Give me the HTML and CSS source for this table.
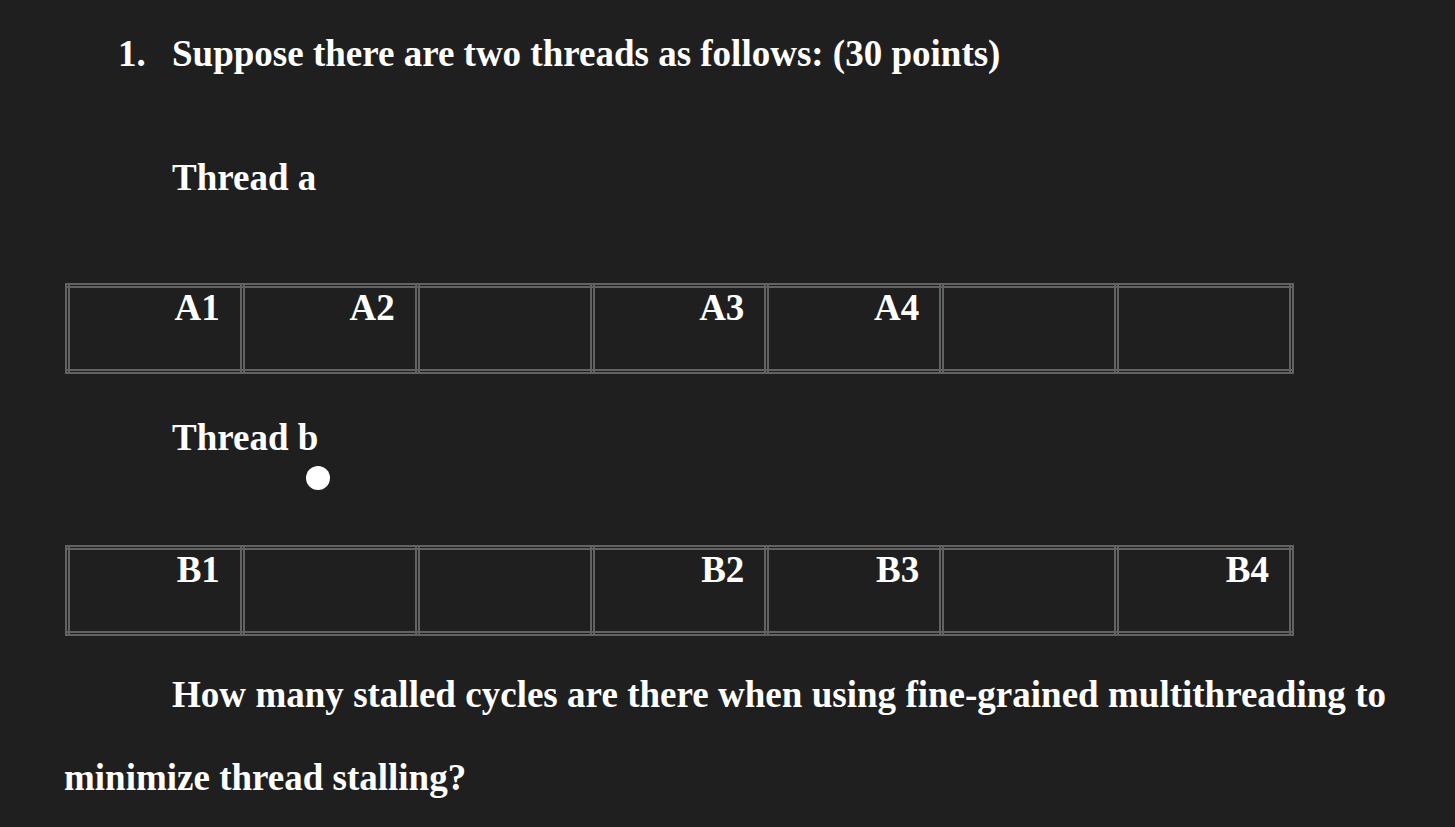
FILE: index.html
```html
<!DOCTYPE html>
<html lang="en">
<head>
<meta charset="utf-8">
<title>Question 1</title>
<link rel="stylesheet" href="styles.css">
</head>
<body>
<main class="doc">
  <div class="item">
    <span class="num">1.</span>
    <span class="item-text">Suppose there are two threads as follows: (30 points)</span>
  </div>

  <p class="label label-a">Thread a</p>

  <table class="slots slots-a">
    <tr>
      <td>A1</td><td>A2</td><td></td><td>A3</td><td>A4</td><td></td><td></td>
    </tr>
  </table>

  <p class="label label-b">Thread b</p>

  <table class="slots slots-b">
    <tr>
      <td>B1</td><td></td><td></td><td>B2</td><td>B3</td><td></td><td>B4</td>
    </tr>
  </table>

  <p class="question">How many stalled cycles are there when using fine-grained multithreading to minimize thread stalling?</p>
</main>
<div class="dot"></div>
</body>
</html>
```

FILE: styles.css
```css
html, body {
  margin: 0;
  padding: 0;
  background: #1f1f1f;
}

body {
  width: 1455px;
  height: 827px;
  overflow: hidden;
  position: relative;
  color: #ffffff;
  font-family: "Liberation Serif", "Times New Roman", serif;
  font-weight: bold;
  font-size: 37px;
}

.doc {
  width: 1322px;
  padding-left: 64px;
  padding-top: 29px;
}

.item {
  display: flex;
  padding-left: 54px;
  line-height: 50px;
  height: 50px;
}

.num {
  width: 54px;
  flex: none;
}

.label {
  margin: 0;
  padding-left: 108px;
  line-height: 50px;
  height: 50px;
}

.label-a {
  margin-top: 74px;
}

.label-b {
  margin-top: 39px;
}

.slots {
  border-collapse: collapse;
  table-layout: fixed;
  width: 1229px;
  margin-left: 1px;
}

.slots-a {
  margin-top: 80px;
}

.slots-b {
  margin-top: 82px;
}

.slots td {
  border: 5px double #626262;
  height: 76px;
  padding: 5px 20px 0 0;
  vertical-align: top;
  text-align: right;
  line-height: 30px;
  font-size: 37px;
}

.question {
  margin: 17px 0 0 0;
  text-indent: 108px;
  text-align: justify;
  line-height: 83px;
}

.dot {
  position: absolute;
  left: 306px;
  top: 466px;
  width: 24px;
  height: 24px;
  border-radius: 50%;
  background: #ffffff;
}
```
